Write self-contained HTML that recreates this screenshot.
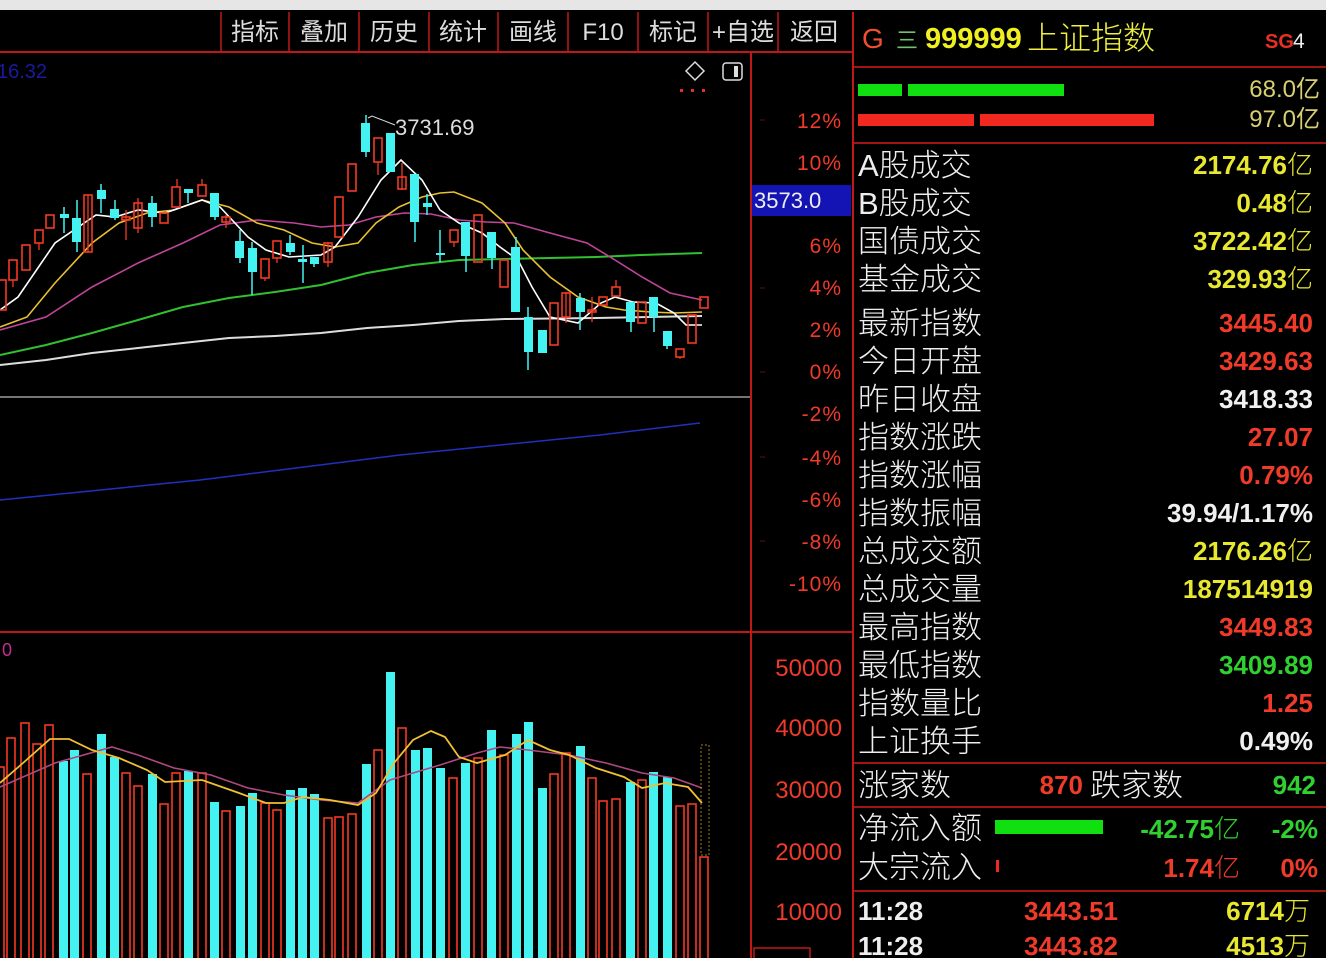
<!DOCTYPE html>
<html><head><meta charset="utf-8"><style>
html,body{margin:0;padding:0;background:#000;width:1326px;height:958px;overflow:hidden}
svg{display:block}
.cj{font-family:"Liberation Sans","Noto Sans CJK SC",sans-serif}
.lb{font-family:"Liberation Sans","Noto Sans CJK SC",sans-serif;font-size:31px;fill:#eee;font-weight:300}
.v{font-family:"Liberation Sans","Noto Sans CJK SC",sans-serif;font-size:26px;font-weight:bold;text-anchor:end}
.ax{font-family:"Liberation Sans",sans-serif;font-size:21px;fill:#f03a2a;text-anchor:end;letter-spacing:1px}
.ax2{font-family:"Liberation Sans",sans-serif;font-size:24px;fill:#f03a2a;text-anchor:end}
.tb{font-family:"Liberation Sans","Noto Sans CJK SC",sans-serif;font-size:24px;fill:#ddd;text-anchor:middle}
.r{fill:none;stroke:#f23a22;stroke-width:1.6}
.c{fill:#44f2f2}
</style></head><body>
<svg width="1326" height="958" viewBox="0 0 1326 958">
<rect x="0" y="0" width="1326" height="10" fill="#e6e6e6"/>
<line x1="0" y1="52" x2="852" y2="52" stroke="#c01818" stroke-width="2"/>
<g stroke="#c01818" stroke-width="1.5">
<line x1="221" y1="12" x2="221" y2="52"/><line x1="289" y1="12" x2="289" y2="52"/><line x1="359" y1="12" x2="359" y2="52"/><line x1="429" y1="12" x2="429" y2="52"/><line x1="498" y1="12" x2="498" y2="52"/><line x1="568" y1="12" x2="568" y2="52"/><line x1="638" y1="12" x2="638" y2="52"/><line x1="708" y1="12" x2="708" y2="52"/><line x1="778" y1="12" x2="778" y2="52"/>
</g>
<text class="tb" x="255" y="40">指标</text><text class="tb" x="324" y="40">叠加</text><text class="tb" x="394" y="40">历史</text><text class="tb" x="463" y="40">统计</text><text class="tb" x="533" y="40">画线</text><text class="tb" x="603" y="40">F10</text><text class="tb" x="673" y="40">标记</text><text class="tb" x="743" y="40">+自选</text><text class="tb" x="814" y="40">返回</text>
<line x1="751" y1="52" x2="751" y2="958" stroke="#c01818" stroke-width="2"/>
<line x1="853" y1="12" x2="853" y2="958" stroke="#c01818" stroke-width="2"/>
<line x1="0" y1="632" x2="852" y2="632" stroke="#c01818" stroke-width="2"/>
<text x="-3" y="78" font-family="Liberation Sans" font-size="20" fill="#1a1aa0">16.32</text>
<path d="M695 62 L704 71 L695 80 L686 71 Z" fill="none" stroke="#ddd" stroke-width="1.5"/>
<rect x="723" y="63" width="19" height="17" rx="3" fill="none" stroke="#ddd" stroke-width="1.5"/><rect x="734" y="66" width="4" height="11" fill="#ddd"/>
<g fill="#e03030"><rect x="680" y="89" width="3" height="3"/><rect x="691" y="89" width="3" height="3"/><rect x="702" y="89" width="3" height="3"/></g>
<g stroke="#601010"><line x1="760" y1="120" x2="765" y2="120"/><line x1="760" y1="288" x2="765" y2="288"/><line x1="760" y1="372" x2="765" y2="372"/><line x1="760" y1="457" x2="765" y2="457"/><line x1="760" y1="541" x2="765" y2="541"/></g>
<text class="ax" x="842" y="128">12%</text><text class="ax" x="842" y="170">10%</text><text class="ax" x="842" y="253">6%</text><text class="ax" x="842" y="295">4%</text><text class="ax" x="842" y="337">2%</text><text class="ax" x="842" y="379">0%</text><text class="ax" x="842" y="421">-2%</text><text class="ax" x="842" y="465">-4%</text><text class="ax" x="842" y="507">-6%</text><text class="ax" x="842" y="549">-8%</text><text class="ax" x="842" y="591">-10%</text>
<rect x="752" y="185" width="99" height="31" fill="#1414b4"/>
<text x="754" y="208" font-family="Liberation Sans" font-size="22" fill="#eee">3573.0</text>
<text class="ax2" x="842" y="676">50000</text><text class="ax2" x="842" y="736">40000</text><text class="ax2" x="842" y="798">30000</text><text class="ax2" x="842" y="860">20000</text><text class="ax2" x="842" y="920">10000</text>
<rect x="754" y="948" width="56" height="14" fill="none" stroke="#c01818" stroke-width="1.5"/>
<line x1="0" y1="397" x2="750" y2="397" stroke="#bbb" stroke-width="1.2"/>
<polyline points="0,500 200,480 400,455 600,435 700,423" fill="none" stroke="#2030c0" stroke-width="1.5"/>
<polyline fill="none" stroke="#ddd" stroke-width="2" points="0,365 46,360 92,353 138,348 183,343 229,338 275,336 321,333 367,328 413,325 459,321 505,319 596,318 702,316"/>
<polyline fill="none" stroke="#30c030" stroke-width="2" points="0,355 46,345 92,333 138,320 183,307 229,298 275,292 321,285 367,273 413,265 459,260 505,259 550,258 596,257 642,255 702,253"/>
<polyline fill="none" stroke="#c0449a" stroke-width="1.6" points="0,330 46,317 92,287 138,263 183,243 220,225 257,220 294,223 321,227 349,225 376,217 404,213 431,214 459,220 486,222 514,223 550,233 587,243 615,260 642,277 670,293 702,300"/>
<polyline fill="none" stroke="#e8c030" stroke-width="1.6" points="0,327 27,317 55,283 92,243 119,223 147,213 174,210 202,200 229,207 257,223 284,230 312,243 335,247 358,243 376,223 399,207 422,197 440,193 454,192 482,203 505,223 523,250 550,277 578,297 606,307 624,310 651,312 674,313 702,312"/>
<polyline fill="none" stroke="#fff" stroke-width="1.6" points="0,310 18,297 55,243 96,215 115,217 138,210 165,213 202,200 220,207 248,237 266,250 289,257 321,255 335,247 358,217 381,180 401,160 422,180 440,210 459,223 482,233 500,247 518,260 532,287 550,317 578,323 601,303 615,297 633,302 656,303 674,313 686,325 702,325"/>
<g stroke="#f23a22" stroke-width="1.3">
<line x1="13" y1="280" x2="13" y2="287"/><line x1="39" y1="243" x2="39" y2="250"/><line x1="88" y1="195" x2="88" y2="252"/><line x1="126" y1="210" x2="126" y2="240"/><line x1="138" y1="198" x2="138" y2="233"/><line x1="177" y1="179" x2="177" y2="187"/><line x1="202" y1="179" x2="202" y2="185"/><line x1="226" y1="215" x2="226" y2="228"/><line x1="265" y1="278" x2="265" y2="281"/><line x1="277" y1="258" x2="277" y2="263"/><line x1="328" y1="242" x2="328" y2="267"/><line x1="378" y1="162" x2="378" y2="175"/><line x1="402" y1="163" x2="402" y2="190"/><line x1="454" y1="242" x2="454" y2="247"/><line x1="566" y1="292" x2="566" y2="323"/><line x1="592" y1="297" x2="592" y2="322"/><line x1="616" y1="280" x2="616" y2="287"/><line x1="680" y1="357" x2="680" y2="359"/>
</g>
<g stroke="#44f2f2" stroke-width="1.5">
<line x1="64" y1="207" x2="64" y2="233"/><line x1="77" y1="200" x2="77" y2="252"/><line x1="101" y1="184" x2="101" y2="213"/><line x1="115" y1="200" x2="115" y2="220"/><line x1="152" y1="196" x2="152" y2="227"/><line x1="188" y1="189" x2="188" y2="203"/><line x1="215" y1="193" x2="215" y2="220"/><line x1="240" y1="230" x2="240" y2="263"/><line x1="252" y1="242" x2="252" y2="295"/><line x1="290" y1="235" x2="290" y2="255"/><line x1="303" y1="245" x2="303" y2="283"/><line x1="314" y1="257" x2="314" y2="267"/><line x1="366" y1="115" x2="366" y2="157"/><line x1="415" y1="174" x2="415" y2="242"/><line x1="427" y1="194" x2="427" y2="215"/><line x1="440" y1="230" x2="440" y2="262"/><line x1="466" y1="222" x2="466" y2="272"/><line x1="492" y1="232" x2="492" y2="269"/><line x1="516" y1="237" x2="516" y2="312"/><line x1="528" y1="307" x2="528" y2="370"/><line x1="580" y1="293" x2="580" y2="330"/><line x1="631" y1="302" x2="631" y2="332"/><line x1="654" y1="297" x2="654" y2="332"/><line x1="667" y1="331" x2="667" y2="349"/>
</g>
<g class="r">
<rect x="-2" y="280" width="8" height="30"/><rect x="9" y="260" width="8" height="20"/><rect x="22" y="245" width="8" height="25"/><rect x="35" y="230" width="8" height="13"/><rect x="46" y="215" width="8" height="13"/><rect x="84" y="195" width="8" height="57"/><rect x="122" y="217" width="8" height="3"/><rect x="134" y="203" width="8" height="25"/><rect x="160" y="213" width="8" height="10"/><rect x="172" y="187" width="8" height="20"/><rect x="198" y="185" width="8" height="11"/><rect x="222" y="217" width="8" height="5"/><rect x="261" y="259" width="8" height="19"/><rect x="273" y="241" width="8" height="17"/><rect x="324" y="243" width="8" height="19"/><rect x="335" y="197" width="8" height="40"/><rect x="348" y="164" width="8" height="27"/><rect x="374" y="138" width="8" height="24"/><rect x="398" y="177" width="8" height="12"/><rect x="450" y="230" width="8" height="12"/><rect x="474" y="215" width="8" height="47"/><rect x="500" y="260" width="8" height="27"/><rect x="550" y="303" width="8" height="42"/><rect x="562" y="293" width="8" height="24"/><rect x="588" y="310" width="8" height="2"/><rect x="599" y="297" width="8" height="8"/><rect x="612" y="287" width="8" height="9"/><rect x="638" y="302" width="8" height="21"/><rect x="676" y="349" width="8" height="8"/><rect x="688" y="315" width="8" height="28"/><rect x="700" y="297" width="8" height="11"/>
</g>
<g class="c">
<rect x="60" y="214" width="9" height="4"/><rect x="72" y="218" width="9" height="24"/><rect x="97" y="190" width="9" height="9"/><rect x="110" y="209" width="9" height="9"/><rect x="148" y="203" width="9" height="14"/><rect x="184" y="189" width="9" height="4"/><rect x="210" y="193" width="9" height="24"/><rect x="235" y="241" width="9" height="17"/><rect x="248" y="248" width="9" height="24"/><rect x="286" y="243" width="9" height="9"/><rect x="298" y="259" width="9" height="3"/><rect x="310" y="257" width="9" height="7"/><rect x="361" y="123" width="9" height="29"/><rect x="386" y="133" width="9" height="39"/><rect x="410" y="174" width="9" height="48"/><rect x="423" y="203" width="9" height="4"/><rect x="436" y="253" width="9" height="2"/><rect x="461" y="222" width="9" height="34"/><rect x="487" y="232" width="9" height="26"/><rect x="511" y="247" width="9" height="65"/><rect x="524" y="317" width="9" height="35"/><rect x="538" y="330" width="9" height="23"/><rect x="576" y="298" width="9" height="14"/><rect x="626" y="302" width="9" height="20"/><rect x="649" y="297" width="9" height="20"/><rect x="663" y="331" width="9" height="15"/>
</g>
<text x="395" y="135" font-family="Liberation Sans" font-size="22" fill="#ddd">3731.69</text>
<polyline points="368,118 372,116 395,125" fill="none" stroke="#ddd" stroke-width="1"/>
<text x="2" y="656" font-family="Liberation Sans" font-size="18" fill="#c03090">0</text>
<g class="r">
<rect x="-4" y="767" width="8" height="195"/><rect x="7" y="738" width="8" height="224"/><rect x="21" y="723" width="8" height="239"/><rect x="33" y="744" width="8" height="218"/><rect x="45" y="725" width="8" height="237"/><rect x="83" y="774" width="8" height="188"/><rect x="122" y="773" width="8" height="189"/><rect x="134" y="786" width="8" height="176"/><rect x="160" y="804" width="8" height="158"/><rect x="172" y="773" width="8" height="189"/><rect x="198" y="773" width="8" height="189"/><rect x="222" y="811" width="8" height="151"/><rect x="261" y="803" width="8" height="159"/><rect x="273" y="810" width="8" height="152"/><rect x="324" y="818" width="8" height="144"/><rect x="335" y="817" width="8" height="145"/><rect x="348" y="814" width="8" height="148"/><rect x="374" y="750" width="8" height="212"/><rect x="398" y="728" width="8" height="234"/><rect x="449" y="778" width="8" height="184"/><rect x="474" y="758" width="8" height="204"/><rect x="500" y="755" width="8" height="207"/><rect x="550" y="774" width="8" height="188"/><rect x="562" y="753" width="8" height="209"/><rect x="588" y="778" width="8" height="184"/><rect x="599" y="801" width="8" height="161"/><rect x="612" y="799" width="8" height="163"/><rect x="638" y="780" width="8" height="182"/><rect x="676" y="806" width="8" height="156"/><rect x="688" y="804" width="8" height="158"/><rect x="700" y="857" width="8" height="105"/>
</g>
<g class="c">
<rect x="59" y="761" width="9" height="197"/><rect x="70" y="750" width="9" height="208"/><rect x="97" y="734" width="9" height="224"/><rect x="110" y="757" width="9" height="201"/><rect x="148" y="774" width="9" height="184"/><rect x="184" y="771" width="9" height="187"/><rect x="210" y="802" width="9" height="156"/><rect x="236" y="806" width="9" height="152"/><rect x="248" y="793" width="9" height="165"/><rect x="286" y="790" width="9" height="168"/><rect x="298" y="788" width="9" height="170"/><rect x="310" y="794" width="9" height="164"/><rect x="362" y="764" width="9" height="194"/><rect x="386" y="672" width="9" height="286"/><rect x="411" y="750" width="9" height="208"/><rect x="423" y="748" width="9" height="210"/><rect x="436" y="768" width="9" height="190"/><rect x="461" y="763" width="9" height="195"/><rect x="487" y="730" width="9" height="228"/><rect x="512" y="734" width="9" height="224"/><rect x="524" y="722" width="9" height="236"/><rect x="538" y="788" width="9" height="170"/><rect x="576" y="746" width="9" height="212"/><rect x="626" y="782" width="9" height="176"/><rect x="649" y="772" width="9" height="186"/><rect x="663" y="777" width="9" height="181"/>
</g>
<polyline fill="none" stroke="#b04880" stroke-width="1.6" points="0,787 55,763 112,747 138,755 174,768 211,775 248,788 284,795 321,800 358,803 390,780 413,773 440,765 477,753 500,747 528,750 569,755 606,763 642,773 674,778 702,788"/>
<polyline fill="none" stroke="#f0c030" stroke-width="1.8" points="0,783 23,763 50,739 69,739 92,750 119,758 147,770 165,782 202,780 239,793 266,803 284,803 303,797 330,800 358,805 376,793 394,763 413,740 431,731 445,737 459,757 477,763 505,755 528,740 550,750 569,755 596,768 624,777 642,788 665,783 688,787 702,803"/>
<rect x="701" y="745" width="8" height="110" fill="none" stroke="#a08020" stroke-width="1" stroke-dasharray="2,2"/>
<text x="862" y="48" font-family="Liberation Sans" font-size="28" fill="#f05030">G</text>
<text x="896" y="48" class="cj" font-size="22" fill="#70c070">三</text>
<text x="925" y="48" font-family="Liberation Sans" font-size="29" font-weight="bold" fill="#f0f020">999999</text>
<text x="1027" y="49" class="cj" font-size="32" fill="#f0f040" font-weight="300">上证指数</text>
<text x="1265" y="48" font-family="Liberation Sans" font-size="20" font-weight="bold" fill="#e83020">SG</text>
<text x="1293" y="48" font-family="Liberation Sans" font-size="21" fill="#eee">4</text>
<g stroke="#a01414" stroke-width="2"><line x1="854" y1="67" x2="1326" y2="67"/><line x1="854" y1="143" x2="1326" y2="143"/><line x1="854" y1="763" x2="1326" y2="763"/><line x1="854" y1="807" x2="1326" y2="807"/><line x1="854" y1="891" x2="1326" y2="891"/></g>
<rect x="858" y="84" width="44" height="12" fill="#10e010"/><rect x="908" y="84" width="156" height="12" fill="#10e010"/>
<rect x="858" y="114" width="116" height="12" fill="#f02820"/><rect x="980" y="114" width="174" height="12" fill="#f02820"/>
<text x="1320" y="97" class="cj" font-size="24" fill="#d8d070" text-anchor="end">68.0亿</text>
<text x="1320" y="127" class="cj" font-size="24" fill="#d8d070" text-anchor="end">97.0亿</text>
<g class="lb">
<text x="858" y="176">A股成交</text><text x="858" y="214">B股成交</text><text x="858" y="252">国债成交</text><text x="858" y="290">基金成交</text>
<text x="858" y="334">最新指数</text><text x="858" y="372">今日开盘</text><text x="858" y="410">昨日收盘</text><text x="858" y="448">指数涨跌</text><text x="858" y="486">指数涨幅</text><text x="858" y="524">指数振幅</text><text x="858" y="562">总成交额</text><text x="858" y="600">总成交量</text><text x="858" y="638">最高指数</text><text x="858" y="676">最低指数</text><text x="858" y="714">指数量比</text><text x="858" y="752">上证换手</text>
<text x="858" y="796">涨家数</text><text x="1090" y="796">跌家数</text>
<text x="858" y="839">净流入额</text><text x="858" y="878">大宗流入</text>
</g>
<g class="v">
<text x="1313" y="174" fill="#e8e830">2174.76<tspan font-weight="300">亿</tspan></text>
<text x="1313" y="212" fill="#e8e830">0.48<tspan font-weight="300">亿</tspan></text>
<text x="1313" y="250" fill="#e8e830">3722.42<tspan font-weight="300">亿</tspan></text>
<text x="1313" y="288" fill="#e8e830">329.93<tspan font-weight="300">亿</tspan></text>
<text x="1313" y="332" fill="#f03a2a">3445.40</text>
<text x="1313" y="370" fill="#f03a2a">3429.63</text>
<text x="1313" y="408" fill="#f0f0f0">3418.33</text>
<text x="1313" y="446" fill="#f03a2a">27.07</text>
<text x="1313" y="484" fill="#f03a2a">0.79%</text>
<text x="1313" y="522" fill="#f0f0f0">39.94/1.17%</text>
<text x="1313" y="560" fill="#e8e830">2176.26<tspan font-weight="300">亿</tspan></text>
<text x="1313" y="598" fill="#e8e830">187514919</text>
<text x="1313" y="636" fill="#f03a2a">3449.83</text>
<text x="1313" y="674" fill="#30d030">3409.89</text>
<text x="1313" y="712" fill="#f03a2a">1.25</text>
<text x="1313" y="750" fill="#f0f0f0">0.49%</text>
<text x="1083" y="794" fill="#f03a2a">870</text>
<text x="1316" y="794" fill="#30d030">942</text>
<text x="1240" y="838" fill="#30d030">-42.75<tspan font-weight="300">亿</tspan></text>
<text x="1318" y="838" fill="#30d030">-2%</text>
<text x="1240" y="877" fill="#f03a2a">1.74<tspan font-weight="300">亿</tspan></text>
<text x="1318" y="877" fill="#f03a2a">0%</text>
<text x="1310" y="920" fill="#e8e830">6714<tspan font-weight="300">万</tspan></text>
<text x="1310" y="955" fill="#e8e830">4513<tspan font-weight="300">万</tspan></text>
<text x="1118" y="920" fill="#f03a2a">3443.51</text>
<text x="1118" y="955" fill="#f03a2a">3443.82</text>
</g>
<text x="858" y="920" font-family="Liberation Sans" font-size="26" font-weight="bold" fill="#eee">11:28</text>
<text x="858" y="955" font-family="Liberation Sans" font-size="26" font-weight="bold" fill="#eee">11:28</text>
<rect x="995" y="820" width="108" height="14" fill="#10e010"/>
<rect x="996" y="860" width="3" height="12" fill="#f02820"/>
</svg>
</body></html>
